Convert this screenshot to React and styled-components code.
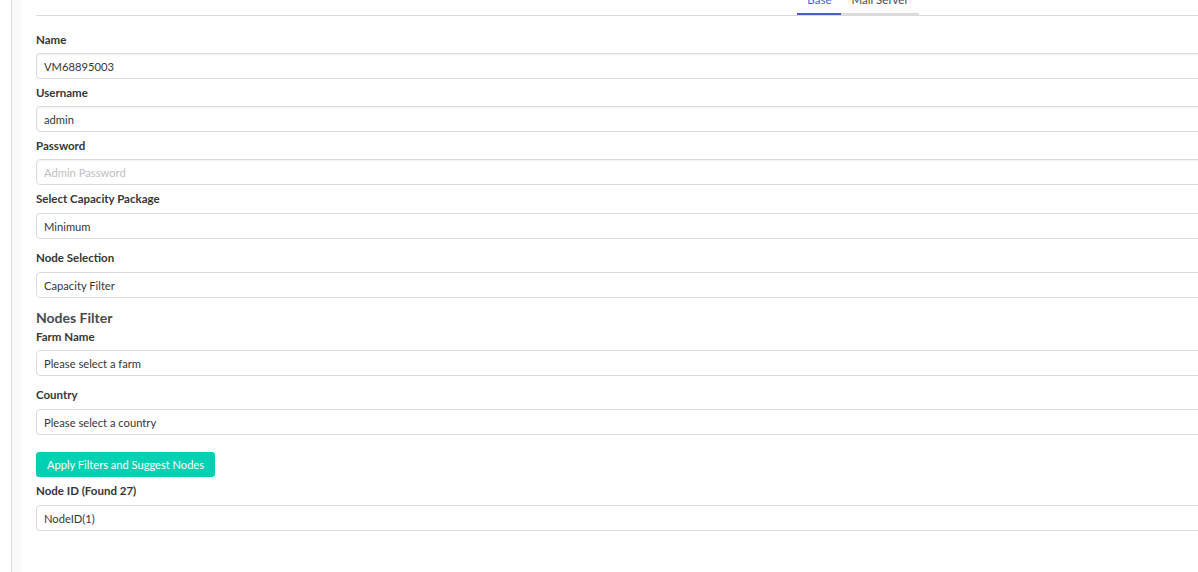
import React from "react";
import styled, { createGlobalStyle } from "styled-components";

const Global = createGlobalStyle`
  html, body { margin: 0; padding: 0; background: #fff; overflow: hidden; }
  body { font-family: Lato, "Noto Sans", sans-serif; color: #4a4a4a; }
  * { box-sizing: border-box; }
`;

const Frame = styled.div`
  margin-left: 11px;
  border-left: 1px solid #dcdcdc;
  background: #f9f9f9;
  padding-left: 9px;
  min-height: 100vh;
`;

const Main = styled.main`
  background: #fff;
  min-height: 100vh;
  padding-left: 15px;
`;

const Form = styled.form`
  width: 1644px;
  display: flex;
  flex-direction: column;
`;

const Tabs = styled.nav`
  margin-top: -9px;
  display: flex;
  justify-content: center;
  border-bottom: 1px solid #dbdbdb;
  margin-bottom: 15px;
`;

const Tab = styled.a`
  display: block;
  font-size: 11.5px;
  line-height: 18px;
  padding: 0 10px 4px;
  color: ${(p) => (p.$active ? "#485fc7" : "#4a4a4a")};
  border-bottom: 2px solid ${(p) => (p.$active ? "#485fc7" : "#dbdbdb")};
  cursor: pointer;
`;

const Field = styled.div`
  display: flex;
  flex-direction: column;
  margin-bottom: ${(p) => p.$gap ?? 5}px;
`;

const Label = styled.label`
  font-size: 11.5px;
  font-weight: 700;
  line-height: 18px;
  color: #363636;
  margin-bottom: ${(p) => p.$mb ?? 4}px;
`;

const Input = styled.input`
  height: 26px;
  width: 100%;
  border: 1px solid #dbdbdb;
  border-radius: 4px;
  box-shadow: inset 0 1px 2px rgba(10, 10, 10, 0.06);
  padding: 0 7px;
  font-family: inherit;
  font-size: 11.2px;
  color: #363636;
  background: #fff;
  outline: none;
  &::placeholder { color: #c0c0c0; }
`;

const Select = styled.select`
  height: 26px;
  width: 100%;
  border: 1px solid #dbdbdb;
  border-radius: 4px;
  padding: 0 7px;
  font-family: inherit;
  font-size: 11.2px;
  color: #363636;
  background: #fff;
  appearance: none;
  outline: none;
`;

const Heading = styled.h3`
  margin: 0;
  font-size: 14px;
  font-weight: 700;
  line-height: 20px;
  color: #4a4a4a;
`;

const Button = styled.button`
  align-self: flex-start;
  height: 25px;
  padding: 0 11px;
  border: none;
  border-radius: 3px;
  background: #00d1b2;
  color: #fff;
  font-family: inherit;
  font-size: 11.1px;
  cursor: pointer;
  margin-bottom: 5px;
`;

export default function App() {
  return (
    <>
      <Global />
      <Frame>
        <Main>
          <Form onSubmit={(e) => e.preventDefault()}>
            <Tabs>
              <Tab $active>Base</Tab>
              <Tab>Mail Server</Tab>
            </Tabs>
            <Field>
              <Label>Name</Label>
              <Input defaultValue="VM68895003" />
            </Field>
            <Field>
              <Label>Username</Label>
              <Input defaultValue="admin" />
            </Field>
            <Field>
              <Label>Password</Label>
              <Input type="password" placeholder="Admin Password" />
            </Field>
            <Field $gap={10}>
              <Label $mb={5}>Select Capacity Package</Label>
              <Select defaultValue="min">
                <option value="min">Minimum</option>
              </Select>
            </Field>
            <Field $gap={10}>
              <Label $mb={5}>Node Selection</Label>
              <Select defaultValue="cap">
                <option value="cap">Capacity Filter</option>
              </Select>
            </Field>
            <Heading>Nodes Filter</Heading>
            <Field $gap={10}>
              <Label>Farm Name</Label>
              <Select defaultValue="">
                <option value="">Please select a farm</option>
              </Select>
            </Field>
            <Field $gap={17}>
              <Label $mb={5}>Country</Label>
              <Select defaultValue="">
                <option value="">Please select a country</option>
              </Select>
            </Field>
            <Button type="button">Apply Filters and Suggest Nodes</Button>
            <Field>
              <Label $mb={5}>Node ID (Found 27)</Label>
              <Select defaultValue="1">
                <option value="1">NodeID(1)</option>
              </Select>
            </Field>
          </Form>
        </Main>
      </Frame>
    </>
  );
}
